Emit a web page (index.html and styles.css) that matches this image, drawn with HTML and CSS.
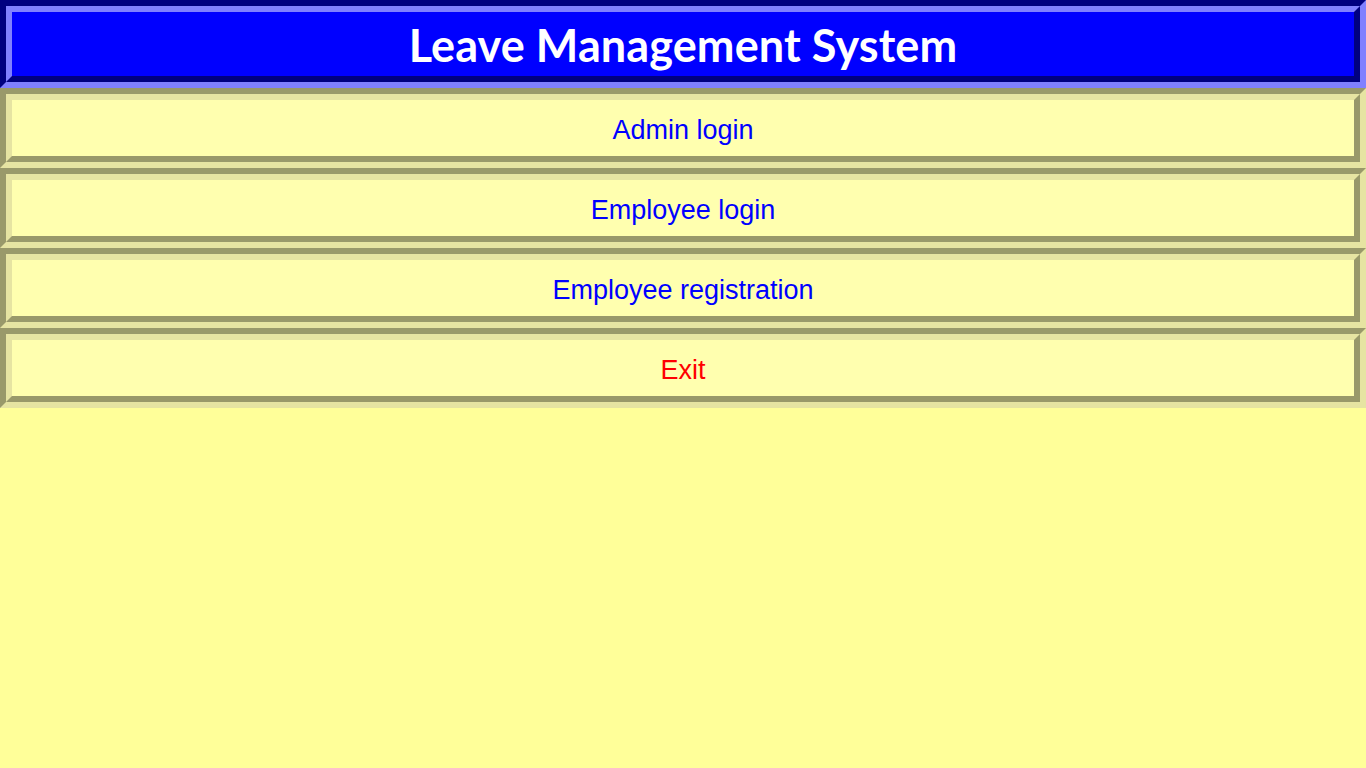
FILE: index.html
```html
<!DOCTYPE html>
<html>
<head>
<meta charset="utf-8">
<title>Leave Management System</title>
<link rel="stylesheet" href="styles.css">
</head>
<body>
<header class="title-outer">
  <div class="title-inner">
    <h1 class="title">Leave Management System</h1>
  </div>
</header>
<nav class="menu">
  <div class="btn-outer"><div class="btn-inner"><span class="btn-text">Admin login</span></div></div>
  <div class="btn-outer"><div class="btn-inner"><span class="btn-text">Employee login</span></div></div>
  <div class="btn-outer"><div class="btn-inner"><span class="btn-text">Employee registration</span></div></div>
  <div class="btn-outer"><div class="btn-inner"><span class="btn-text exit">Exit</span></div></div>
</nav>
</body>
</html>
```
FILE: styles.css
```css
html, body {
  margin: 0;
  padding: 0;
  height: 100%;
}
body {
  background: #ffff99;
  overflow: hidden;
}
.title-outer {
  border-style: solid;
  border-width: 6px;
  border-color: #000080 #8080ff #8080ff #000080;
}
.title-inner {
  border-style: solid;
  border-width: 6px;
  border-color: #8080ff #000080 #000080 #8080ff;
  background: #0000ff;
  height: 64px;
  display: flex;
  align-items: center;
  justify-content: center;
}
.title {
  margin: 0;
  padding-top: 2px;
  font-family: "Lato", "Open Sans", sans-serif;
  font-weight: 700;
  font-size: 45px;
  letter-spacing: 0.1px;
  color: #ffffff;
  line-height: 1;
}
.menu {
  display: flex;
  flex-direction: column;
}
.btn-outer {
  border-style: solid;
  border-width: 6px;
  border-color: #99996a #e6e4a2 #e6e4a2 #99996a;
}
.btn-inner {
  border-style: solid;
  border-width: 6px;
  border-color: #e6e4a2 #99996a #99996a #e6e4a2;
  background: #ffffaf;
  height: 56px;
  display: flex;
  align-items: center;
  justify-content: center;
}
.btn-text {
  padding-top: 4px;
  font-family: "Liberation Sans", Arial, sans-serif;
  font-size: 27px;
  line-height: 1;
  color: #0000ff;
}
.btn-text.exit {
  color: #ff0000;
}
```
